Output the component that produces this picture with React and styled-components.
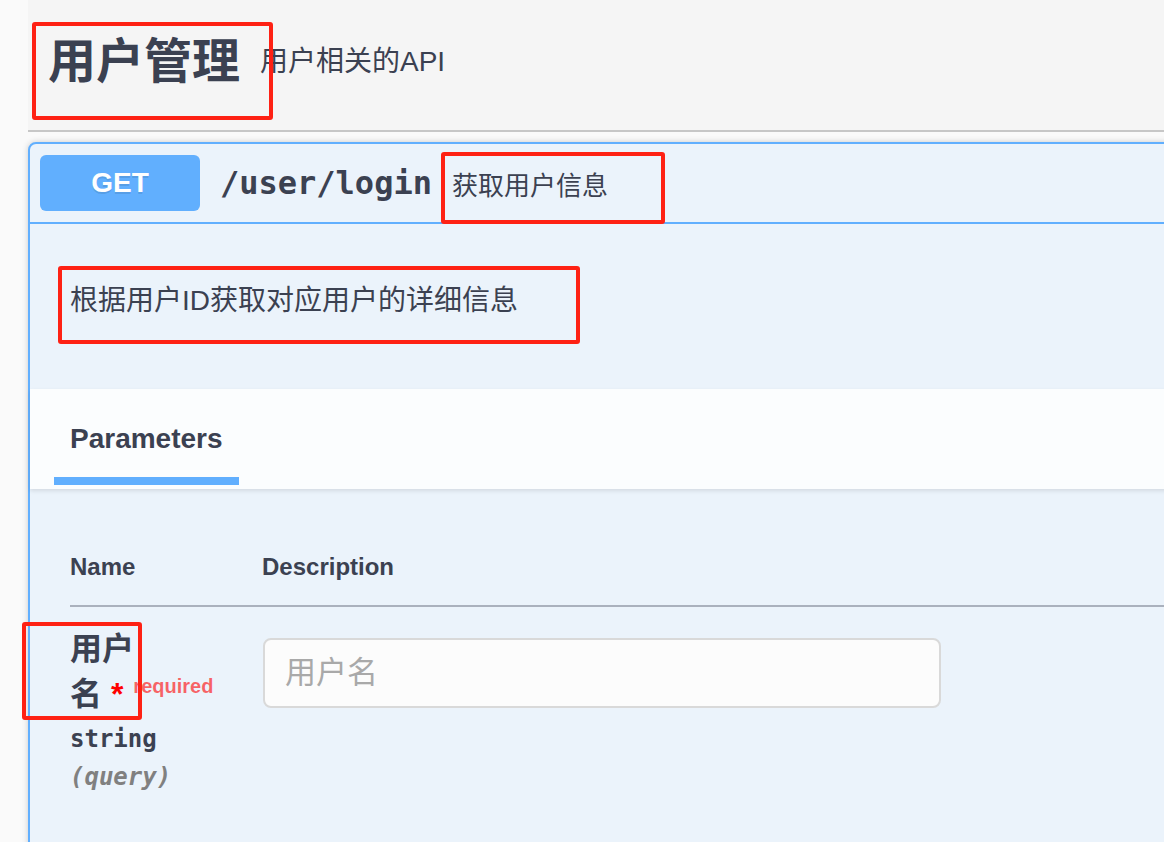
import styled, { createGlobalStyle } from "styled-components";

const GlobalStyle = createGlobalStyle`
  html, body {
    margin: 0;
    padding: 0;
  }
  body {
    background: #fafafa;
    overflow: hidden;
    font-family: "Liberation Sans", "Noto Sans CJK SC", sans-serif;
    color: #3b4151;
  }
`;

const marks = [
  { x: 32, y: 22, w: 241, h: 98 },
  { x: 441, y: 152, w: 224, h: 72 },
  { x: 58, y: 266, w: 522, h: 78 },
  { x: 22, y: 622, w: 120, h: 98 },
];

export default function App() {
  return (
    <>
      <GlobalStyle />
      <Page>
        <TagHeader>
          <TagTitle>用户管理</TagTitle>
          <TagSmall>用户相关的API</TagSmall>
        </TagHeader>

        <Opblock>
          <Summary>
            <Method>GET</Method>
            <Path>/user/login</Path>
            <SummaryText>获取用户信息</SummaryText>
          </Summary>

          <DescriptionWrapper>
            <DescriptionText>根据用户ID获取对应用户的详细信息</DescriptionText>
          </DescriptionWrapper>

          <SectionHeader>
            <Tab>Parameters</Tab>
          </SectionHeader>

          <ParamTable>
            <HeadRow>
              <NameCol>
                <HeadText>Name</HeadText>
              </NameCol>
              <HeadText>Description</HeadText>
            </HeadRow>
            <ParamRow>
              <NameCol>
                <ParamName>
                  用户名
                  <Star>&nbsp;*</Star>
                  <Required>required</Required>
                </ParamName>
                <ParamType>string</ParamType>
                <ParamIn>(query)</ParamIn>
              </NameCol>
              <div>
                <TextInput type="text" placeholder="用户名" />
              </div>
            </ParamRow>
          </ParamTable>
        </Opblock>

        {marks.map((m, i) => (
          <Mark key={i} $x={m.x} $y={m.y} $w={m.w} $h={m.h} />
        ))}
      </Page>
    </>
  );
}

const Page = styled.div`
  position: relative;
  width: 100vw;
  height: 100vh;
  overflow: hidden;
  padding-left: 28px;
  box-sizing: border-box;
`;

const TagHeader = styled.div`
  display: flex;
  align-items: center;
  gap: 20px;
  height: 132px;
  box-sizing: border-box;
  padding: 0 40px 6px 20px;
  background: #f5f5f5;
  border-bottom: 2px solid #c7c7c7;
`;

const TagTitle = styled.span`
  font-size: 48px;
  font-weight: 700;
  line-height: 1;
`;

const TagSmall = styled.span`
  font-size: 28px;
  line-height: 1;
`;

const Opblock = styled.div`
  margin: 10px -60px 0 0;
  height: 760px;
  border: 2px solid #61affe;
  border-radius: 8px;
  background: #ebf3fb;
  box-shadow: 0 0 6px rgba(0, 0, 0, 0.19);
`;

const Summary = styled.div`
  display: flex;
  align-items: center;
  padding: 11px 10px;
  border-bottom: 2px solid #61affe;
`;

const Method = styled.span`
  display: flex;
  align-items: center;
  justify-content: center;
  width: 160px;
  height: 56px;
  border-radius: 6px;
  background: #61affe;
  color: #fff;
  font-size: 28px;
  font-weight: 700;
  text-shadow: 0 2px 0 rgba(0, 0, 0, 0.1);
`;

const Path = styled.span`
  padding: 0 20px;
  font-family: "DejaVu Sans Mono", "Liberation Mono", monospace;
  font-size: 32px;
  font-weight: 700;
`;

const SummaryText = styled.span`
  font-size: 26px;
`;

const DescriptionWrapper = styled.div`
  padding: 29px 40px 30px;
  margin-bottom: 10px;
`;

const DescriptionText = styled.p`
  margin: 28px 0;
  font-size: 28px;
  line-height: 40px;
`;

const SectionHeader = styled.div`
  display: flex;
  align-items: flex-end;
  height: 100px;
  box-sizing: border-box;
  padding: 0 40px 4px 24px;
  background: rgba(255, 255, 255, 0.8);
  box-shadow: 0 2px 4px rgba(0, 0, 0, 0.1);
`;

const Tab = styled.h4`
  margin: 0;
  padding: 0 16px 22px;
  border-bottom: 8px solid #61affe;
  font-size: 28px;
  font-weight: 700;
  line-height: 32px;
`;

const ParamTable = styled.div`
  padding: 40px 0 0 40px;
`;

const HeadRow = styled.div`
  display: flex;
  padding: 24px 0;
  border-bottom: 2px solid #aab1bd;
`;

const NameCol = styled.div`
  flex-shrink: 0;
  width: 192px;
  padding-right: 20px;
  box-sizing: border-box;
`;

const HeadText = styled.div`
  font-size: 24px;
  font-weight: 700;
  line-height: 28px;
`;

const ParamRow = styled.div`
  display: flex;
  padding-top: 20px;
`;

const ParamName = styled.div`
  max-width: 145px;
  font-size: 32px;
  font-weight: 700;
  line-height: 45px;
`;

const Star = styled.span`
  color: red;
`;

const Required = styled.span`
  padding-left: 10px;
  font-size: 20px;
  line-height: 20px;
  vertical-align: 12px;
  color: rgba(255, 0, 0, 0.6);
`;

const ParamType = styled.div`
  margin-top: 3px;
  font-family: "DejaVu Sans Mono", "Liberation Mono", monospace;
  font-size: 24px;
  font-weight: 700;
  line-height: 38px;
`;

const ParamIn = styled(ParamType)`
  margin-top: 0;
  font-style: italic;
  color: #808080;
`;

const TextInput = styled.input`
  display: block;
  width: 678px;
  height: 70px;
  box-sizing: border-box;
  margin: 11px 0 0 1px;
  padding: 0 20px;
  border: 2px solid #d9d9d9;
  border-radius: 8px;
  background: #fcfcfc;
  font-family: "Liberation Sans", "Noto Sans CJK SC", sans-serif;
  font-size: 31px;
  color: #3b4151;
  outline: none;

  &::placeholder {
    color: #a9a9a9;
  }
`;

const Mark = styled.div`
  position: absolute;
  left: ${(p) => p.$x}px;
  top: ${(p) => p.$y}px;
  width: ${(p) => p.$w}px;
  height: ${(p) => p.$h}px;
  box-sizing: border-box;
  border: 4px solid #fe2114;
  border-radius: 3px;
  pointer-events: none;
`;
